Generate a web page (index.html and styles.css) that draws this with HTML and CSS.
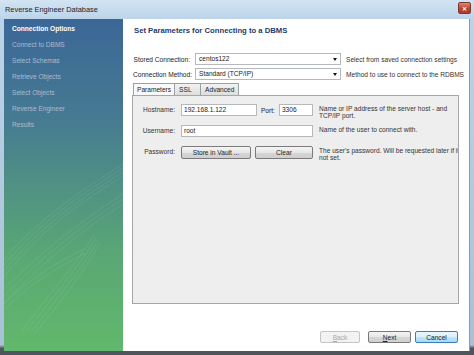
FILE: index.html
```html
<!DOCTYPE html>
<html>
<head>
    <title>Reverse Engineer Database</title>
    <link rel="stylesheet" href="styles.css">
</head>
<body>
    <div class="window">
        <div class="titlebar">
            <span class="title">Reverse Engineer Database</span>
            <span class="close-btn">&#x2715;</span>
        </div>

        <div class="frame">
            <div class="sidebar">
                <svg class="swoosh" width="119" height="331" viewBox="0 0 119 331">
                    <g fill="none" stroke="#ffffff" stroke-opacity="0.08" stroke-width="1">
                        <path d="M119 145 C80 170 40 195 0 240"/>
                        <path d="M119 149 C80 174 40 199 0 246"/>
                        <path d="M119 153 C80 178 40 203 0 252"/>
                        <path d="M119 157 C80 182 40 207 0 258"/>
                        <path d="M119 175 C80 200 40 230 0 270"/>
                        <path d="M119 180 C80 205 40 236 0 277"/>
                        <path d="M119 185 C80 210 40 242 0 284"/>
                        <path d="M90 215 C70 250 40 280 18 312"/>
                        <path d="M92 218 C72 253 44 283 22 313"/>
                        <path d="M94 221 C74 256 48 286 26 314"/>
                        <path d="M96 224 C76 259 52 289 30 315"/>
                        <path d="M80 230 C50 245 25 260 0 285"/>
                        <path d="M82 234 C52 249 27 264 0 291"/>
                    </g>
                </svg>
                <ul class="steps">
                    <li class="active">Connection Options</li>
                    <li>Connect to DBMS</li>
                    <li>Select Schemas</li>
                    <li>Retrieve Objects</li>
                    <li>Select Objects</li>
                    <li>Reverse Engineer</li>
                    <li>Results</li>
                </ul>
            </div>

            <div class="main">
                <h1>Set Parameters for Connecting to a DBMS</h1>

                <div class="field-row first">
                    <label>Stored Connection:</label>
                    <div class="combo">centos122<span class="arrow"></span></div>
                    <span class="hint">Select from saved connection settings</span>
                </div>
                <div class="field-row">
                    <label>Connection Method:</label>
                    <div class="combo">Standard (TCP/IP)<span class="arrow"></span></div>
                    <span class="hint">Method to use to connect to the RDBMS</span>
                </div>

                <div class="tabs">
                    <span class="tab active">Parameters</span>
                    <span class="tab">SSL</span>
                    <span class="tab">Advanced</span>
                </div>

                <div class="panel">
                    <div class="param-grid">
                        <label>Hostname:</label>
                        <div class="inputs">
                            <div class="textbox host">192.168.1.122</div>
                            <span class="port-label">Port:</span>
                            <div class="textbox port">3306</div>
                        </div>
                        <span class="hint">Name or IP address of the server host - and<br>TCP/IP port.</span>

                        <label>Username:</label>
                        <div class="inputs">
                            <div class="textbox wide">root</div>
                        </div>
                        <span class="hint">Name of the user to connect with.</span>

                        <label>Password:</label>
                        <div class="inputs">
                            <button class="btn vault">Store in Vault ...</button>
                            <button class="btn clear">Clear</button>
                        </div>
                        <span class="hint">The user's password. Will be requested later if it's<br>not set.</span>
                    </div>
                </div>

                <div class="footer">
                    <button class="btn disabled"><u>B</u>ack</button>
                    <button class="btn next"><u>N</u>ext</button>
                    <button class="btn cancel">Cancel</button>
                </div>
            </div>
        </div>
    </div>
</body>
</html>
```

FILE: styles.css
```css
body {
    margin: 0;
    background: #4e555c;
    font-family: "Liberation Sans", Arial, sans-serif;
    font-size: 6.6px;
    color: #222;
}
.window {
    width: 474px;
    height: 355px;
    display: flex;
    flex-direction: column;
    background: linear-gradient(to right, #b7d0e8, #c3d9ee 40%, #a9c3dc 75%, #bcd3e8);
}
.titlebar {
    height: 19px;
    display: flex;
    align-items: center;
    justify-content: space-between;
    padding: 0 3px 0 5px;
    background: linear-gradient(to bottom, #d3e4f3, #bcd4ea);
}
.title {
    font-size: 7.4px;
    color: #1b1b1b;
}
.close-btn {
    width: 11px;
    height: 10px;
    margin-top: -3px;
    background: linear-gradient(to bottom, #d98a78, #c0432f 55%, #b23a26);
    border: 1px solid #7a3a30;
    border-radius: 2px;
    color: #fff;
    font-size: 6px;
    font-weight: bold;
    display: flex;
    align-items: center;
    justify-content: center;
}
.frame {
    flex: 1;
    display: flex;
    padding: 0 4px 4px 4px;
    background: linear-gradient(to bottom, #bcd3e8 0%, #a9c0d6 97%, #4e555c 98%);
}
.sidebar {
    width: 119px;
    flex-shrink: 0;
    position: relative;
    overflow: hidden;
    background: linear-gradient(to bottom, #3b6797 0%, #467a92 30%, #4f9183 50%, #5aa874 72%, #62b86c 100%);
}
.swoosh {
    position: absolute;
    left: 0;
    top: 0;
}
.steps {
    list-style: none;
    margin: 0;
    padding: 2px 0 0 8px;
    position: relative;
}
.steps li {
    height: 16px;
    line-height: 16px;
    color: #a7bdd2;
}
.steps li.active {
    color: #fff;
    font-weight: bold;
}
.main {
    flex: 1;
    min-width: 0;
    overflow: hidden;
    background: #fff;
    display: flex;
    flex-direction: column;
    padding: 7px 11px 8px 10px;
    border-right: 1px solid #8d9aa6;
}
h1 {
    margin: 0 0 0 1px;
    font-size: 7.7px;
    line-height: 9px;
    color: #1f3a6e;
}
.field-row {
    display: flex;
    align-items: center;
    height: 12px;
    margin-top: 3px;
}
.field-row.first {
    margin-top: 18px;
}
.field-row label {
    width: 57px;
    text-align: right;
    margin-right: 5px;
    white-space: nowrap;
}
.combo {
    width: 141px;
    height: 10px;
    flex-shrink: 0;
    border: 1px solid #b5b8bd;
    background: #fff;
    padding-left: 3px;
    line-height: 10px;
    position: relative;
    margin-right: 5px;
}
.arrow {
    position: absolute;
    right: 3px;
    top: 4px;
    border-left: 2px solid transparent;
    border-right: 2px solid transparent;
    border-top: 3px solid #111;
}
.tabs {
    display: flex;
    margin-top: 3px;
    height: 12px;
}
.tab {
    border: 1px solid #9aa0a6;
    border-bottom: none;
    padding: 0 4px;
    line-height: 11px;
    background: linear-gradient(to bottom, #f2f2f2, #dedede);
    margin-left: -1px;
}
.tab:first-child {
    margin-left: 0;
}
.tab.active {
    background: #f9f9f9;
    padding: 0 3px;
}
.tab:nth-child(2) {
    width: 17px;
}
.panel {
    width: 325px;
    height: 207px;
    margin-left: -1px;
    border: 1px solid #a3a7ab;
    background: #eeeeee;
    overflow: hidden;
}
.param-grid {
    display: grid;
    grid-template-columns: 42px 132px 200px;
    column-gap: 6px;
    grid-auto-rows: 21px;
    align-items: start;
    padding-top: 8px;
}
.param-grid label {
    text-align: right;
    line-height: 12px;
    color: #333;
}
.inputs {
    display: flex;
    align-items: center;
}
.textbox {
    height: 10px;
    line-height: 10px;
    border: 1px solid #b5b8bd;
    background: #fff;
    padding-left: 2px;
}
.host {
    width: 74px;
}
.port-label {
    margin: 0 4px 0 4px;
}
.port {
    width: 31px;
}
.wide {
    width: 130px;
}
.hint {
    line-height: 7px;
    color: #333;
    white-space: nowrap;
}
.param-grid .hint {
    padding-top: 1px;
}
.btn {
    font-family: "Liberation Sans", Arial, sans-serif;
    font-size: 6.6px;
    color: #222;
    height: 13px;
    padding: 0;
    border: 1px solid #7a7a7a;
    border-radius: 2px;
    background: linear-gradient(to bottom, #f4f4f4, #e6e6e6 50%, #d6d6d6 51%, #cfcfcf);
}
.vault {
    width: 70px;
}
.clear {
    width: 58px;
    margin-left: 4px;
}
.footer {
    margin-top: auto;
    display: flex;
    justify-content: flex-end;
}
.footer .btn {
    height: 12px;
    width: 42px;
}
.footer .disabled {
    width: 40px;
    color: #a8a8a8;
    border-color: #c4c4c4;
    background: #f2f2f2;
}
.footer .next {
    margin-left: 8px;
    width: 43px;
}
.footer .cancel {
    margin-left: 4px;
    width: 43px;
    border-color: #3c7fb1;
    background: linear-gradient(to bottom, #eaf6fd, #d9f0fc 50%, #bee6fd 51%, #a7d9f5);
}
```
